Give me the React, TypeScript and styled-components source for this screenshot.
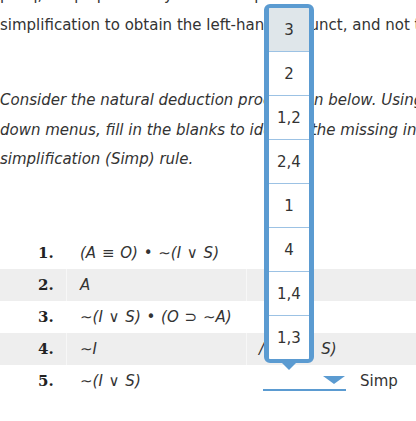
import React from "react";
import styled, { createGlobalStyle } from "styled-components";

const Global = createGlobalStyle`
  html, body { margin: 0; padding: 0; background: #fff; overflow: hidden; }
  body { font-family: "DejaVu Sans", Verdana, sans-serif; font-size: 15px; color: #333; }
`;

const BLUE = "#5b9bd1";

const Page = styled.div`
  width: 680px;
`;

const Para = styled.p<{ $italic?: boolean; $top: number }>`
  margin: ${(p) => p.$top}px 0 0 0;
  line-height: 29.5px;
  white-space: nowrap;
  font-style: ${(p) => (p.$italic ? "italic" : "normal")};
`;

const Table = styled.div`
  margin-top: 62px;
  display: flex;
  flex-direction: column;
`;

const Row = styled.div<{ $shaded?: boolean }>`
  display: grid;
  grid-template-columns: 66px 180px 1fr;
  height: 32px;
  align-items: stretch;
  background: ${(p) => (p.$shaded ? "#eeeeee" : "transparent")};
`;

const NumCell = styled.div`
  display: flex;
  align-items: center;
  padding-left: 38px;
  font-family: "DejaVu Serif", Georgia, serif;
  font-weight: bold;
  font-size: 15px;
  color: #222;
`;

const FormulaCell = styled.div`
  display: flex;
  align-items: center;
  padding-left: 13px;
  border-left: 1px solid rgba(255, 255, 255, 0.55);
  font-style: italic;
  white-space: nowrap;
  word-spacing: 1px;
`;

const JustCell = styled.div`
  display: flex;
  align-items: center;
  gap: 14px;
  padding-left: 12px;
  border-left: 1px solid rgba(255, 255, 255, 0.55);
  white-space: nowrap;
`;

const Conclusion = styled.span`
  font-style: italic;
  word-spacing: 3px;
`;

const Select = styled.div`
  position: relative;
  margin-left: 4px;
  width: 83px;
  height: 19px;
  border-bottom: 2px solid ${BLUE};
  display: flex;
  justify-content: flex-end;
  align-items: center;
`;

const Caret = styled.svg`
  display: block;
  margin-right: 1px;
  margin-top: 1px;
`;

const Menu = styled.div`
  position: absolute;
  left: 1px;
  bottom: 100%;
  display: flex;
  flex-direction: column;
  align-items: center;
`;

const MenuBox = styled.ul`
  list-style: none;
  margin: 0;
  padding: 0;
  width: 50px;
  box-sizing: border-box;
  border: 5px solid ${BLUE};
  border-top-width: 4px;
  border-bottom-width: 4px;
  border-radius: 6px;
  background: #fff;
  overflow: hidden;
`;

const Item = styled.li<{ $active?: boolean }>`
  height: 43px;
  display: flex;
  align-items: center;
  justify-content: center;
  background: ${(p) => (p.$active ? "#dfe6ea" : "#fff")};
  color: #333;
  font-size: 15px;
  & + & {
    border-top: 1px solid #9cc2e4;
  }
`;

const Pointer = styled.svg`
  display: block;
  margin-top: -1px;
`;

const options = ["3", "2", "1,2", "2,4", "1", "4", "1,4", "1,3"];

export default function App() {
  return (
    <Page>
      <Global />
      <Para $top={-19}>
        p • q, as q • p before you use simplification to consider the conjunct
        <br />
        simplification to obtain the left-hand conjunct, and not the right-hand one.
      </Para>
      <Para $italic $top={46}>
        Consider the natural deduction proof given below. Using the drop-
        <br />
        down menus, fill in the blanks to identify the missing information for the
        <br />
        simplification (Simp) rule.
      </Para>
      <Table>
        <Row>
          <NumCell>1.</NumCell>
          <FormulaCell>(A ≡ O) • ∼(I ∨ S)</FormulaCell>
          <JustCell />
        </Row>
        <Row $shaded>
          <NumCell>2.</NumCell>
          <FormulaCell>A</FormulaCell>
          <JustCell />
        </Row>
        <Row>
          <NumCell>3.</NumCell>
          <FormulaCell>∼(I ∨ S) • (O ⊃ ∼A)</FormulaCell>
          <JustCell />
        </Row>
        <Row $shaded>
          <NumCell>4.</NumCell>
          <FormulaCell>∼I</FormulaCell>
          <JustCell>
            <Conclusion>/ ∼(I ∨ S)</Conclusion>
          </JustCell>
        </Row>
        <Row>
          <NumCell>5.</NumCell>
          <FormulaCell>∼(I ∨ S)</FormulaCell>
          <JustCell>
            <Select>
              <Menu>
                <MenuBox>
                  {options.map((o, i) => (
                    <Item key={o} $active={i === 0}>
                      {o}
                    </Item>
                  ))}
                </MenuBox>
                <Pointer width="16" height="8" viewBox="0 0 16 8">
                  <polygon points="0,0 16,0 8,8" fill={BLUE} />
                </Pointer>
              </Menu>
              <Caret width="22" height="8" viewBox="0 0 22 8">
                <polygon points="0,0 22,0 11,8" fill={BLUE} />
              </Caret>
            </Select>
            <span>Simp</span>
          </JustCell>
        </Row>
      </Table>
    </Page>
  );
}
